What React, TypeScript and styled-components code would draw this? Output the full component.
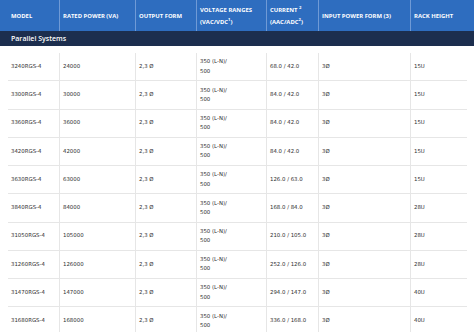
import styled, { createGlobalStyle } from "styled-components";

const GlobalStyle = createGlobalStyle`
  html, body {
    margin: 0;
    padding: 0;
    background: #ffffff;
  }
  body {
    width: 474px;
    height: 332px;
    overflow: hidden;
    font-family: "DejaVu Sans", sans-serif;
  }
`;

const COLS = "59px 76px 61px 70px 52px 92px 64px";
const BODY_COLS = "51px 76px 61px 70px 52px 92px 57px";

const Table = styled.div`
  width: 474px;
  display: flex;
  flex-direction: column;
`;

const HeaderRow = styled.div`
  display: grid;
  grid-template-columns: ${COLS};
  height: 31px;
  background: #2e6dbf;
`;

const HeaderCell = styled.div<{ $first?: boolean }>`
  display: flex;
  flex-direction: column;
  justify-content: center;
  padding-left: ${(p) => (p.$first ? "11px" : "3px")};
  border-left: ${(p) => (p.$first ? "none" : "1px solid #6f9ad6")};
  color: #ffffff;
  font-family: "Open Sans", sans-serif;
  font-weight: 700;
  font-size: 5.9px;
  line-height: 12px;
  white-space: nowrap;

  sup {
    font-size: 4.2px;
    line-height: 0;
    vertical-align: 3px;
  }
`;

const GroupRow = styled.div`
  height: 15px;
  background: #1c2e4e;
  color: #ffffff;
  font-family: "Open Sans", sans-serif;
  font-weight: 600;
  font-size: 7px;
  display: flex;
  align-items: center;
  padding-left: 11px;
`;

const Body = styled.div`
  padding: 7px 7px 0 8px;
`;

const Row = styled.div`
  display: grid;
  grid-template-columns: ${BODY_COLS};
  height: 28.25px;
  box-sizing: border-box;
  border-bottom: 1px solid #e6e6e6;
`;

const Cell = styled.div<{ $first?: boolean }>`
  display: flex;
  flex-direction: column;
  justify-content: center;
  padding-left: 3px;
  border-left: ${(p) => (p.$first ? "none" : "1px solid #e6e6e6")};
  color: #2e2e2e;
  font-size: 5.4px;
  line-height: 9.3px;
  white-space: nowrap;
`;

type Unit = {
  model: string;
  power: string;
  current: string;
  rack: string;
};

const units: Unit[] = [
  { model: "3240RGS-4", power: "24000", current: "68.0 / 42.0", rack: "15U" },
  { model: "3300RGS-4", power: "30000", current: "84.0 / 42.0", rack: "15U" },
  { model: "3360RGS-4", power: "36000", current: "84.0 / 42.0", rack: "15U" },
  { model: "3420RGS-4", power: "42000", current: "84.0 / 42.0", rack: "15U" },
  { model: "3630RGS-4", power: "63000", current: "126.0 / 63.0", rack: "15U" },
  { model: "3840RGS-4", power: "84000", current: "168.0 / 84.0", rack: "28U" },
  { model: "31050RGS-4", power: "105000", current: "210.0 / 105.0", rack: "28U" },
  { model: "31260RGS-4", power: "126000", current: "252.0 / 126.0", rack: "28U" },
  { model: "31470RGS-4", power: "147000", current: "294.0 / 147.0", rack: "40U" },
  { model: "31680RGS-4", power: "168000", current: "336.0 / 168.0", rack: "40U" },
];

function App() {
  return (
    <>
      <GlobalStyle />
      <Table>
        <HeaderRow>
          <HeaderCell $first>MODEL</HeaderCell>
          <HeaderCell>RATED POWER (VA)</HeaderCell>
          <HeaderCell>OUTPUT FORM</HeaderCell>
          <HeaderCell>
            <span>VOLTAGE RANGES</span>
            <span>
              (VAC/VDC<sup>1</sup>)
            </span>
          </HeaderCell>
          <HeaderCell>
            <span>
              CURRENT <sup>2</sup>
            </span>
            <span>
              (AAC/ADC<sup>2</sup>)
            </span>
          </HeaderCell>
          <HeaderCell>INPUT POWER FORM (3)</HeaderCell>
          <HeaderCell>RACK HEIGHT</HeaderCell>
        </HeaderRow>
        <GroupRow>Parallel Systems</GroupRow>
        <Body>
          {units.map((u) => (
            <Row key={u.model}>
              <Cell $first>{u.model}</Cell>
              <Cell>{u.power}</Cell>
              <Cell>2,3 Ø</Cell>
              <Cell>
                <span>350 (L-N)/</span>
                <span>500</span>
              </Cell>
              <Cell>{u.current}</Cell>
              <Cell>3Ø</Cell>
              <Cell>{u.rack}</Cell>
            </Row>
          ))}
        </Body>
      </Table>
    </>
  );
}

export default App;
